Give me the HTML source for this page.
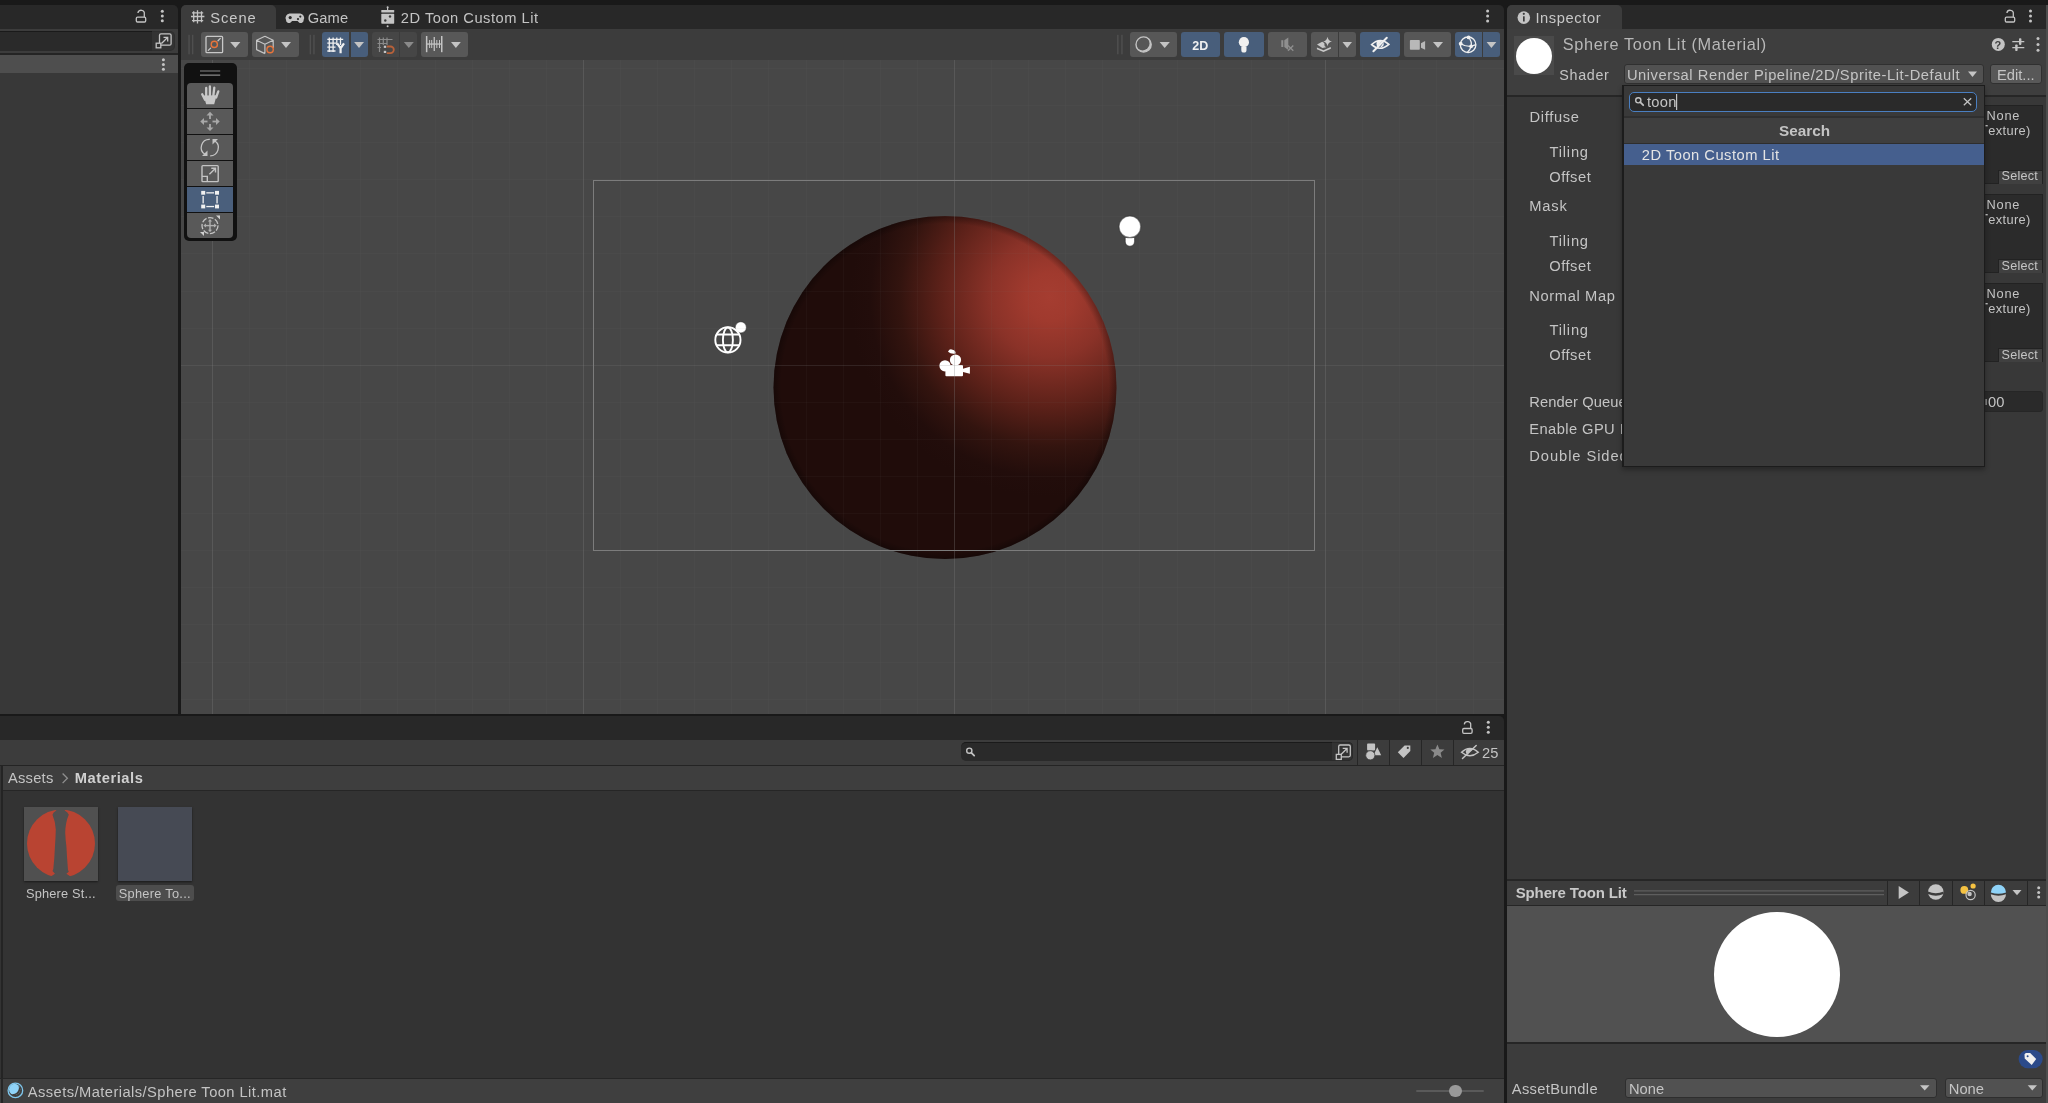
<!DOCTYPE html>
<html><head><meta charset="utf-8">
<style>
*{box-sizing:border-box;margin:0;padding:0}
html,body{width:2048px;height:1103px;overflow:hidden;background:#191919;font-family:"Liberation Sans",sans-serif;color:#c4c4c4}
.a{position:absolute}
.t{position:absolute;white-space:nowrap;line-height:1}
svg{position:absolute;overflow:visible;will-change:transform}
</style></head><body>


<!-- ============ LEFT HIERARCHY PANEL ============ -->
<div class="a" style="left:0;top:5px;width:178px;height:24px;background:#282828;border-top-right-radius:5px"></div>
<div class="a" style="left:0;top:29px;width:178px;height:24px;background:#3c3c3c"></div>
<div class="a" style="left:0;top:31px;width:152px;height:20px;background:#2a2a2a;border-top:1.3px solid #1a1a1a"></div>
<div class="a" style="left:152px;top:31px;width:23px;height:20px;background:#333;border-radius:0 5px 5px 0;border:1px solid #2e2e2e;border-left:none"></div>
<div class="a" style="left:0;top:53px;width:178px;height:2px;background:#242424"></div>
<div class="a" style="left:0;top:55px;width:178px;height:18px;background:#4e4e4e"></div>
<div class="a" style="left:0;top:73px;width:178px;height:641px;background:#383838"></div>

<!-- ============ SCENE PANEL ============ -->
<div class="a" style="left:181px;top:5px;width:1323px;height:24px;background:#282828;border-top-left-radius:5px;border-top-right-radius:5px"></div>
<div class="a" style="left:181px;top:5px;width:95px;height:26px;background:#3c3c3c;border-top-left-radius:5px;border-top-right-radius:5px"></div>
<div class="a" style="left:181px;top:29px;width:1323px;height:31px;background:#3c3c3c"></div>
<div class="a" style="left:181px;top:60px;width:1323px;height:654px;background:#474747;overflow:hidden" id="sv"></div>

<!-- ============ INSPECTOR PANEL ============ -->
<div class="a" style="left:1507px;top:5px;width:541px;height:24px;background:#282828;border-top-left-radius:5px"></div>
<div class="a" style="left:1507px;top:5px;width:115px;height:26px;background:#3c3c3c;border-top-left-radius:5px;border-top-right-radius:5px"></div>
<div class="a" style="left:1507px;top:29px;width:540px;height:66px;background:#3e3e3e"></div>
<div class="a" style="left:1507px;top:95px;width:540px;height:2px;background:#262626"></div>
<div class="a" style="left:1507px;top:97px;width:540px;height:782px;background:#383838"></div>
<div class="a" style="left:1507px;top:879px;width:540px;height:2px;background:#262626"></div>
<div class="a" style="left:1507px;top:881px;width:540px;height:24px;background:#3c3c3c"></div>
<div class="a" style="left:1507px;top:905px;width:540px;height:1px;background:#262626"></div>
<div class="a" style="left:1507px;top:906px;width:540px;height:136px;background:#515151"></div>
<div class="a" style="left:1507px;top:1042px;width:540px;height:2px;background:#262626"></div>
<div class="a" style="left:1507px;top:1044px;width:540px;height:59px;background:#3c3c3c"></div>

<!-- ============ PROJECT PANEL ============ -->
<div class="a" style="left:0;top:716px;width:1504px;height:24px;background:#282828;border-top-right-radius:5px"></div>
<div class="a" style="left:0;top:740px;width:1504px;height:25px;background:#3c3c3c"></div>
<div class="a" style="left:0;top:765px;width:1504px;height:1px;background:#242424"></div>
<div class="a" style="left:0;top:766px;width:1504px;height:312px;background:#333333"></div>
<div class="a" style="left:3px;top:766px;width:1501px;height:24px;background:#3e3e3e"></div>
<div class="a" style="left:3px;top:790px;width:1501px;height:1px;background:#262626"></div>
<div class="a" style="left:1px;top:766px;width:2px;height:337px;background:#242424"></div>
<div class="a" style="left:0;top:1078px;width:1504px;height:1px;background:#262626"></div>
<div class="a" style="left:0;top:1079px;width:1504px;height:24px;background:#3f3f3f"></div>

<div class="a" style="left:1px;top:1078px;width:1.5px;height:25px;background:#262626"></div>
<svg style="left:0;top:0" width="2048" height="1103" viewBox="0 0 2048 1103">
<defs><clipPath id="svc"><rect x="181" y="60" width="1323" height="654"/></clipPath><radialGradient id="sph" gradientUnits="userSpaceOnUse" cx="1050" cy="297" r="200" fx="1050" fy="297"><stop offset="0" stop-color="#a53d31"/><stop offset="0.12" stop-color="#a03a2e"/><stop offset="0.3" stop-color="#8a3228"/><stop offset="0.55" stop-color="#5c2119"/><stop offset="0.75" stop-color="#33140f"/><stop offset="0.9" stop-color="#220d0b"/><stop offset="1" stop-color="#200c0a"/></radialGradient><radialGradient id="rim" gradientUnits="userSpaceOnUse" cx="945" cy="387.5" r="171.5"><stop offset="0.955" stop-color="#000" stop-opacity="0"/><stop offset="1" stop-color="#000" stop-opacity="0.3"/></radialGradient></defs>
<g clip-path="url(#svc)">
<rect x="181" y="60" width="1323" height="654" fill="#474747"/>
<circle cx="945" cy="387.5" r="171.5" fill="url(#sph)"/>
<circle cx="945" cy="387.5" r="171.5" fill="url(#rim)"/>

<g stroke="#333" stroke-opacity="0.6" stroke-width="1.2" fill="#fff">
<!-- light gizmo -->
<path d="M1125.2 237.5H1134.6V241.6A4.7 4.7 0 0 1 1125.2 241.6Z"/>
<circle cx="1129.9" cy="226.8" r="10.9"/>
<!-- globe dot -->
<circle cx="740.8" cy="327.4" r="5.7"/>
</g>
<g fill="none" stroke="#fff" stroke-width="1.9">
<circle cx="727.9" cy="339.9" r="12.6"/>
<ellipse cx="727.9" cy="339.9" rx="5" ry="12.4"/>
<path d="M716.3 334.5H739.5M716.3 345.2H739.5"/>
</g>
<!-- camera gizmo -->
<g fill="#fff">
<circle cx="955.5" cy="360" r="5.6"/>
<circle cx="945" cy="365.8" r="5.6"/>
<rect x="945.4" y="365" width="17.6" height="11.2" rx="1"/>
<path d="M962 369L969.9 366.7V373.8L962 371.8Z"/>
<path d="M948 351.8Q949.5 348.3 952.6 349.8Q955.8 350.5 955.6 353.5Q951 354.3 948 351.8Z"/>
</g>

<rect x="212" y="60" width="1" height="654" fill="#808080" fill-opacity="0.315"/>
<rect x="249" y="60" width="1" height="654" fill="#808080" fill-opacity="0.055"/>
<rect x="286" y="60" width="1" height="654" fill="#808080" fill-opacity="0.055"/>
<rect x="323" y="60" width="1" height="654" fill="#808080" fill-opacity="0.055"/>
<rect x="360" y="60" width="1" height="654" fill="#808080" fill-opacity="0.055"/>
<rect x="397" y="60" width="1" height="654" fill="#808080" fill-opacity="0.055"/>
<rect x="435" y="60" width="1" height="654" fill="#808080" fill-opacity="0.055"/>
<rect x="472" y="60" width="1" height="654" fill="#808080" fill-opacity="0.055"/>
<rect x="509" y="60" width="1" height="654" fill="#808080" fill-opacity="0.055"/>
<rect x="546" y="60" width="1" height="654" fill="#808080" fill-opacity="0.055"/>
<rect x="583" y="60" width="1" height="654" fill="#808080" fill-opacity="0.315"/>
<rect x="620" y="60" width="1" height="654" fill="#808080" fill-opacity="0.055"/>
<rect x="657" y="60" width="1" height="654" fill="#808080" fill-opacity="0.055"/>
<rect x="694" y="60" width="1" height="654" fill="#808080" fill-opacity="0.055"/>
<rect x="731" y="60" width="1" height="654" fill="#808080" fill-opacity="0.055"/>
<rect x="768" y="60" width="1" height="654" fill="#808080" fill-opacity="0.055"/>
<rect x="806" y="60" width="1" height="654" fill="#808080" fill-opacity="0.055"/>
<rect x="843" y="60" width="1" height="654" fill="#808080" fill-opacity="0.055"/>
<rect x="880" y="60" width="1" height="654" fill="#808080" fill-opacity="0.055"/>
<rect x="917" y="60" width="1" height="654" fill="#808080" fill-opacity="0.055"/>
<rect x="954" y="60" width="1" height="654" fill="#808080" fill-opacity="0.315"/>
<rect x="991" y="60" width="1" height="654" fill="#808080" fill-opacity="0.055"/>
<rect x="1028" y="60" width="1" height="654" fill="#808080" fill-opacity="0.055"/>
<rect x="1065" y="60" width="1" height="654" fill="#808080" fill-opacity="0.055"/>
<rect x="1102" y="60" width="1" height="654" fill="#808080" fill-opacity="0.055"/>
<rect x="1139" y="60" width="1" height="654" fill="#808080" fill-opacity="0.055"/>
<rect x="1177" y="60" width="1" height="654" fill="#808080" fill-opacity="0.055"/>
<rect x="1214" y="60" width="1" height="654" fill="#808080" fill-opacity="0.055"/>
<rect x="1251" y="60" width="1" height="654" fill="#808080" fill-opacity="0.055"/>
<rect x="1288" y="60" width="1" height="654" fill="#808080" fill-opacity="0.055"/>
<rect x="1325" y="60" width="1" height="654" fill="#808080" fill-opacity="0.315"/>
<rect x="1362" y="60" width="1" height="654" fill="#808080" fill-opacity="0.055"/>
<rect x="1399" y="60" width="1" height="654" fill="#808080" fill-opacity="0.055"/>
<rect x="1436" y="60" width="1" height="654" fill="#808080" fill-opacity="0.055"/>
<rect x="1473" y="60" width="1" height="654" fill="#808080" fill-opacity="0.055"/>
<rect x="181" y="68" width="1323" height="1" fill="#808080" fill-opacity="0.055"/>
<rect x="181" y="105" width="1323" height="1" fill="#808080" fill-opacity="0.055"/>
<rect x="181" y="142" width="1323" height="1" fill="#808080" fill-opacity="0.055"/>
<rect x="181" y="179" width="1323" height="1" fill="#808080" fill-opacity="0.055"/>
<rect x="181" y="216" width="1323" height="1" fill="#808080" fill-opacity="0.055"/>
<rect x="181" y="253" width="1323" height="1" fill="#808080" fill-opacity="0.055"/>
<rect x="181" y="291" width="1323" height="1" fill="#808080" fill-opacity="0.055"/>
<rect x="181" y="328" width="1323" height="1" fill="#808080" fill-opacity="0.055"/>
<rect x="181" y="365" width="1323" height="1" fill="#808080" fill-opacity="0.2"/>
<rect x="181" y="402" width="1323" height="1" fill="#808080" fill-opacity="0.055"/>
<rect x="181" y="439" width="1323" height="1" fill="#808080" fill-opacity="0.055"/>
<rect x="181" y="476" width="1323" height="1" fill="#808080" fill-opacity="0.055"/>
<rect x="181" y="513" width="1323" height="1" fill="#808080" fill-opacity="0.055"/>
<rect x="181" y="550" width="1323" height="1" fill="#808080" fill-opacity="0.055"/>
<rect x="181" y="587" width="1323" height="1" fill="#808080" fill-opacity="0.055"/>
<rect x="181" y="624" width="1323" height="1" fill="#808080" fill-opacity="0.055"/>
<rect x="181" y="662" width="1323" height="1" fill="#808080" fill-opacity="0.055"/>
<rect x="181" y="699" width="1323" height="1" fill="#808080" fill-opacity="0.055"/>
<rect x="593.5" y="180.5" width="721" height="370" fill="none" stroke="#7c7c7c" stroke-width="1"/>
</g></svg>
<div class="a" style="left:183.5px;top:63px;width:53px;height:177.5px;background:#111;border-radius:5px"></div>
<div class="a" style="left:187px;top:83px;width:46px;height:24.7px;background:#595959;border-radius:4px 4px 0 0"></div>
<div class="a" style="left:187px;top:109px;width:46px;height:24.7px;background:#595959"></div>
<div class="a" style="left:187px;top:135px;width:46px;height:24.6px;background:#595959"></div>
<div class="a" style="left:187px;top:161px;width:46px;height:24.8px;background:#595959"></div>
<div class="a" style="left:187px;top:187px;width:46px;height:24.8px;background:#4a5f7c"></div>
<div class="a" style="left:187px;top:213px;width:46px;height:24.8px;background:#595959;border-radius:0 0 4px 4px"></div>
<svg style="left:0;top:0" width="2048" height="1103">
<path d="M200 71H220.2M200 75.1H220.2" stroke="#8a8a8a" stroke-width="1.1"/>
<!-- hand -->
<g fill="#c8c8c8">
<path d="M203.6 95.6L216.6 95.3L214.2 104.2H206.2Z"/>
</g>
<g stroke="#c8c8c8" stroke-width="2.3" stroke-linecap="round" fill="none">
<path d="M206.2 96.5V87.9M209.9 95.5V86.4M213.3 96L214.3 87.7M216.1 97.5L218.3 91.4M205 99.8L202.2 94.2"/>
</g>
<!-- move -->
<g fill="#a8a8a8">
<rect x="209.1" y="114.5" width="1.8" height="4.5"/><rect x="209.1" y="124" width="1.8" height="4.5"/>
<rect x="203" y="120.6" width="4.5" height="1.8"/><rect x="212.5" y="120.6" width="4.5" height="1.8"/>
<path d="M206.5 115.5L210 111.8L213.5 115.5Z"/><path d="M206.5 127.4L210 131L213.5 127.4Z"/>
<path d="M204 118L200.3 121.5L204 125Z"/><path d="M216 118L219.7 121.5L216 125Z"/>
</g>
<!-- rotate -->
<g fill="none" stroke="#c4c4c4" stroke-width="1.3">
<path d="M209.8 139.3A8.2 8.2 0 0 0 205.2 154.5"/>
<path d="M210.2 155.8A8.2 8.2 0 0 0 215 141"/>
</g>
<g fill="#c4c4c4">
<path d="M207.5 150.5V156H202Z"/><path d="M212.5 144.5V139H218Z"/>
</g>
<!-- scale -->
<g fill="none" stroke="#c4c4c4" stroke-width="1.4">
<rect x="202" y="165.6" width="16.2" height="16" rx="0.8"/>
<path d="M202 176.4H207.3V181.6M209.4 174.3L215.3 168.4M211.3 168.3H215.5V172.5"/>
</g>
<!-- rect tool -->
<g fill="#f0f0f0">
<rect x="201.2" y="190.9" width="4" height="3.8"/><rect x="215" y="190.9" width="4" height="3.8"/>
<rect x="201.2" y="204.6" width="4" height="3.8"/><rect x="215" y="204.6" width="4" height="3.8"/>
<rect x="206.3" y="192.2" width="7.8" height="1.3"/><rect x="206.3" y="205.9" width="7.8" height="1.3"/>
<rect x="202.5" y="196" width="1.3" height="7.4"/><rect x="216.4" y="196" width="1.3" height="7.4"/>
</g>
<!-- transform tool -->
<g fill="none" stroke="#c4c4c4" stroke-width="1.3" stroke-dasharray="5.5 1.6">
<circle cx="210" cy="225.6" r="8"/>
</g>
<g fill="#b0b0b0">
<rect x="209.3" y="220" width="1.4" height="11"/><rect x="204.5" y="224.9" width="11" height="1.4"/>
<path d="M208 221.5L210 218.9L212 221.5Z"/><path d="M208 229.7L210 232.3L212 229.7Z"/>
<path d="M206 223.6L203.4 225.6L206 227.6Z"/><path d="M214 223.6L216.6 225.6L214 227.6Z"/>
</g>
<g fill="#d0d0d0"><path d="M216 215.5H220V219.5Z"/><path d="M200 232H204V236Z"/></g>
</svg>
<!-- scene toolbar buttons -->
<div class="a" style="left:201px;top:32px;width:46.5px;height:24.6px;background:#575757;border-radius:3px"></div>
<div class="a" style="left:252px;top:32px;width:46.5px;height:24.6px;background:#575757;border-radius:3px"></div>
<div class="a" style="left:322px;top:32px;width:46px;height:24.6px;background:#485e7b;border-radius:3px"></div>
<div class="a" style="left:349.3px;top:32px;width:1.4px;height:24.6px;background:#3c3c3c"></div>
<div class="a" style="left:372px;top:32px;width:44.7px;height:24.6px;background:#464646;border-radius:3px"></div>
<div class="a" style="left:399px;top:32px;width:1.2px;height:24.6px;background:#3c3c3c"></div>
<div class="a" style="left:421px;top:32px;width:46.7px;height:24.6px;background:#585858;border-radius:3px"></div>
<div class="a" style="left:1130px;top:32px;width:47px;height:24.6px;background:#575757;border-radius:3px"></div>
<div class="a" style="left:1181px;top:32px;width:39px;height:24.6px;background:#485e7b;border-radius:3px"></div>
<div class="a" style="left:1224px;top:32px;width:39.7px;height:24.6px;background:#485e7b;border-radius:3px"></div>
<div class="a" style="left:1267.5px;top:32px;width:39.5px;height:24.6px;background:#575757;border-radius:3px"></div>
<div class="a" style="left:1311px;top:32px;width:45.4px;height:24.6px;background:#575757;border-radius:3px"></div>
<div class="a" style="left:1338px;top:32px;width:1.2px;height:24.6px;background:#3c3c3c"></div>
<div class="a" style="left:1360.3px;top:32px;width:39.7px;height:24.6px;background:#485e7b;border-radius:3px"></div>
<div class="a" style="left:1403.8px;top:32px;width:46.9px;height:24.6px;background:#575757;border-radius:3px"></div>
<div class="a" style="left:1454.6px;top:32px;width:45.4px;height:24.6px;background:#485e7b;border-radius:3px"></div>
<div class="a" style="left:1481.5px;top:32px;width:1.2px;height:24.6px;background:#3c3c3c"></div>
<svg style="left:0;top:0" width="2048" height="1103">
<g fill="#555">
<rect x="188.5" y="34.8" width="1.1" height="19.5"/><rect x="192.2" y="34.8" width="1.1" height="19.5"/>
<rect x="309.7" y="34.8" width="1.1" height="19.5"/><rect x="313.4" y="34.8" width="1.1" height="19.5"/>
<rect x="1117.3" y="34.8" width="1.1" height="19.5"/><rect x="1121.4" y="34.8" width="1.1" height="19.5"/>
</g>
<g fill="#c4c4c4">
<path d="M230.2 42H240.4L235.3 48.1Z"/><path d="M281.1 42H291L286 48.1Z"/>
<path d="M354.1 42H364L359 48.1Z"/><path d="M451 42H460.8L455.9 47.9Z"/>
<path d="M1159.6 42H1169.8L1164.7 48.1Z"/><path d="M1342.5 42H1352L1347.2 48Z"/>
<path d="M1433 42H1443L1438 48Z"/><path d="M1486.6 42H1496.3L1491.4 48Z"/>
</g>
<path d="M403.9 42H413.8L408.8 48.1Z" fill="#8a8a8a"/>
<!-- rect gizmo icon -->
<rect x="206" y="36.4" width="16.6" height="16.3" rx="1" fill="none" stroke="#c8c8c8" stroke-width="1.3"/>
<path d="M208.3 50.4L210.6 48.1M218 40.7L220.3 38.4" stroke="#c8c8c8" stroke-width="1.3" stroke-linecap="round"/>
<circle cx="214.3" cy="44.4" r="3.1" fill="none" stroke="#e8743b" stroke-width="1.4"/>
<!-- cube icon -->
<path d="M264.9 36.2L273.2 40.2V48M264.9 36.2L256.6 40.2V49.6L264.9 53.6M256.6 40.2L264.9 44.2L273.2 40.2M264.9 44.2V53.6" fill="none" stroke="#c4c4c4" stroke-width="1.2" stroke-linejoin="round"/>
<circle cx="270.1" cy="49.5" r="3.2" fill="#575757" stroke="#e8743b" stroke-width="1.4"/>
<!-- grid Y icon -->
<path d="M329.3 37.5V52M333.1 37.5V52M336.8 37.5V45M340.5 37.5V45M327.3 39.3H343.2M327.3 43.2H336M327.3 47.2H335.5M327.3 51H335.5" stroke="#f0f0f0" stroke-width="1.3" fill="none"/>
<path d="M337.2 43.3L340.6 48.2L344 43.3M340.6 48.2V53.2" stroke="#f0f0f0" stroke-width="2.2" fill="none"/>
<!-- snap icon -->
<path d="M379.5 37.5V52M383.3 37.5V45M387 37.5V45M377.5 39.5H392.5M377.5 43.5H386.5M377.5 47.5H381" stroke="#8a8a8a" stroke-width="1.2" fill="none"/>
<rect x="383.8" y="45.7" width="2.4" height="2.2" fill="#c4c4c4"/><rect x="383.8" y="50.8" width="2.4" height="2.2" fill="#c4c4c4"/>
<path d="M386.8 46.5H390.5A3.3 3.3 0 0 1 390.5 53.1H386.8" fill="none" stroke="#b8613a" stroke-width="1.8"/>
<!-- ruler icon -->
<g fill="#c4c4c4">
<rect x="425.9" y="36" width="1.5" height="16.2"/><rect x="441" y="36" width="1.5" height="16.2"/>
<rect x="433.6" y="37" width="1.3" height="14"/>
<rect x="429.1" y="40" width="1" height="8"/><rect x="431.2" y="40" width="1" height="8"/>
<rect x="436.3" y="40" width="1" height="8"/><rect x="439" y="40" width="1" height="8"/>
<rect x="426" y="43.4" width="15.5" height="1.3"/>
</g>
<!-- shading icon -->
<circle cx="1143.6" cy="44.5" r="7.6" fill="#c4c4c4"/>
<circle cx="1142.5" cy="43.4" r="7" fill="#575757"/>
<circle cx="1143.6" cy="44.5" r="7.6" fill="none" stroke="#c4c4c4" stroke-width="1.4"/>
<!-- 2D -->
<text x="1192.2" y="50" font-family="Liberation Sans" font-size="13.4" font-weight="700" fill="#f0f0f0" textLength="16" lengthAdjust="spacingAndGlyphs">2D</text>
<!-- light bulb -->
<circle cx="1243.9" cy="42.2" r="5.1" fill="#f0f0f0"/>
<path d="M1241.3 46.8H1246.5V50A2.6 2.6 0 0 1 1241.3 50Z" fill="#f0f0f0"/>
<!-- audio muted -->
<g fill="#8f8f8f">
<rect x="1281.3" y="40.2" width="2" height="6.8"/>
<path d="M1284.3 40.2L1288.3 37.6V50L1284.3 47Z"/>
</g>
<path d="M1288 45.5L1293.3 50.8M1293.3 45.5L1288 50.8" stroke="#8f8f8f" stroke-width="1.3"/>
<!-- effects -->
<g fill="#c8c8c8">
<path d="M1327.5 36.8Q1328.1 40.9 1332 41.5Q1328.1 42.1 1327.5 46.3Q1326.9 42.1 1323.1 41.5Q1326.9 40.9 1327.5 36.8Z"/>
<path d="M1317 44.4L1322.2 41.7L1324.3 43Q1323.8 45.9 1326.2 47.3L1322.4 48Z"/>
<path d="M1316.9 47.6L1323.5 50.3L1330.7 46.9L1330.9 48.7L1323.5 52L1316.9 49.2Z"/>
</g>
<!-- hidden eye -->
<path d="M1371.6 44.6Q1380 36.6 1388.9 44.3Q1380 52 1371.6 44.6Z" fill="none" stroke="#f0f0f0" stroke-width="1.6"/>
<path d="M1376.8 40.9L1382.6 40.3L1377.1 46.9Q1376 43.6 1376.8 40.9Z" fill="#f0f0f0"/>
<path d="M1383.6 42.4Q1384.6 46.6 1379.8 47.8Z" fill="#f0f0f0"/>
<path d="M1373.4 51.3L1386.8 37.7" stroke="#f0f0f0" stroke-width="2" stroke-linecap="round"/>
<!-- camera -->
<g fill="#b8b8b8">
<rect x="1409.9" y="39.9" width="9.9" height="9.9" rx="0.8"/>
<path d="M1421 43.2L1425.1 40.9V49.8L1421 47.7Z"/>
</g>
<!-- gizmos globe -->
<g fill="none" stroke="#f0f0f0" stroke-width="1.3">
<circle cx="1468.1" cy="44.8" r="7.8"/>
<path d="M1460.8 43.8Q1465.5 46.8 1471.1 46.4M1468.6 37.4Q1472.2 41.5 1471.1 46.4Q1470.3 50 1467.2 52.4M1471.1 46.4L1475.8 44.6"/>
</g>
<g fill="#f0f0f0"><circle cx="1468.6" cy="37.4" r="1.9"/><circle cx="1460.7" cy="43.7" r="1.9"/><circle cx="1471.1" cy="46.3" r="1.9"/></g>
</svg>
<svg style="left:0;top:0" width="2048" height="1103">
<g fill="none" stroke="#c4c4c4">
<!-- locks -->
<path d="M144.3 17.2V14.0A3.1 3.1 0 0 0 137.9 13.0" stroke-width="1.3"/>
<rect x="136.3" y="17.2" width="9.4" height="4.8" rx="1.2" stroke-width="1.3"/>
<path d="M2013.3 17.2V14.0A3.1 3.1 0 0 0 2006.9 13.0" stroke-width="1.3"/>
<rect x="2005.3" y="17.2" width="9.4" height="4.8" rx="1.2" stroke-width="1.3"/>
<path d="M1470.7 728.5V725.3A3.1 3.1 0 0 0 1464.3 724.3" stroke-width="1.3"/>
<rect x="1462.7" y="728.5" width="9.4" height="4.8" rx="1.2" stroke-width="1.3"/>
<!-- scene tab # -->
<path d="M193.7 11.3V22.3M197.5 10.2V23.6M201.5 11.3V22.3M192 12.8H203.2M191 16.5H204.4M192 20.6H203.2" stroke-width="1.3"/>
<!-- hierarchy search btn icon -->
<rect x="159.5" y="33.8" width="11.6" height="11.4" rx="1.5" stroke-width="1.3"/>
<rect x="156.2" y="43.2" width="4.6" height="4.6" stroke-width="1.3" fill="#333"/>
<path d="M161.5 43.5L167.5 37.5M163.5 37.3H167.7V41.5" stroke-width="1.3"/>
<!-- info circle -->
</g>
<g fill="#c4c4c4">
<circle cx="162.3" cy="11.2" r="1.5"/><circle cx="162.3" cy="16" r="1.5"/><circle cx="162.3" cy="20.8" r="1.5"/>
<circle cx="163.4" cy="59.7" r="1.5"/><circle cx="163.4" cy="64.5" r="1.5"/><circle cx="163.4" cy="69.2" r="1.5"/>
<circle cx="1487.6" cy="11" r="1.5"/><circle cx="1487.6" cy="16" r="1.5"/><circle cx="1487.6" cy="21" r="1.5"/>
<circle cx="2030.5" cy="11" r="1.5"/><circle cx="2030.5" cy="16" r="1.5"/><circle cx="2030.5" cy="21" r="1.5"/>
<circle cx="1488.3" cy="722.3" r="1.5"/><circle cx="1488.3" cy="727.3" r="1.5"/><circle cx="1488.3" cy="732.3" r="1.5"/>
<circle cx="2038" cy="38.5" r="1.5"/><circle cx="2038" cy="44.5" r="1.5"/><circle cx="2038" cy="50.2" r="1.5"/>
<circle cx="2038.7" cy="887.8" r="1.5"/><circle cx="2038.7" cy="892.4" r="1.5"/><circle cx="2038.7" cy="897.1" r="1.5"/>
<!-- info icon -->
<circle cx="1523.8" cy="17.6" r="6.3"/>
<!-- help icon -->
<circle cx="1998.3" cy="44.4" r="6.5"/>
<!-- gamepad -->
<path d="M289.5 13.5H300.2A4.4 4.4 0 0 1 303.7 19.8A2.9 2.9 0 0 1 298.8 22.2L297.6 20.9H292.1L290.9 22.2A2.9 2.9 0 0 1 286 19.8A4.4 4.4 0 0 1 289.5 13.5Z"/>
<!-- shader icon -->
<rect x="381.3" y="10" width="12.9" height="2.6" rx="0.6"/>
<rect x="381.3" y="13.8" width="12.9" height="9.9" rx="0.6"/>
<rect x="387" y="7" width="1.2" height="3.5"/><circle cx="387.6" cy="7.3" r="1"/><circle cx="387.6" cy="26.2" r="1"/>
</g>
<g fill="#282828">
<circle cx="290.2" cy="17.6" r="1.6"/><circle cx="300.3" cy="16.6" r="1.1"/><circle cx="298" cy="19.1" r="1.1"/>
</g>
<g fill="#3c3c3c">
<circle cx="390" cy="16.5" r="1.2"/><circle cx="385.3" cy="20.5" r="1.2"/>
<rect x="1523" y="16.3" width="1.7" height="5.2"/><circle cx="1523.8" cy="13.8" r="1.1"/>
</g>
<g fill="#3e3e3e"><text x="1994.6" y="49" font-family="Liberation Sans" font-size="11" font-weight="700">?</text></g>
<!-- sliders icon -->
<g stroke="#c4c4c4" stroke-width="1.4" fill="none">
<path d="M2012.3 41.6H2024.3M2012.3 47.6H2024.3"/>
</g>
<g fill="#c4c4c4"><rect x="2019" y="38.3" width="2.4" height="6.6" rx="0.8"/><rect x="2015.2" y="44.4" width="2.4" height="6.6" rx="0.8"/></g>
</svg>
<!-- project toolbar -->
<div class="a" style="left:961px;top:742.3px;width:392px;height:19.2px;background:#2a2a2a;border-radius:5px;border-top:1.3px solid #1a1a1a"></div>
<div class="a" style="left:1331.7px;top:742.3px;width:21.6px;height:19.2px;background:#333;border-radius:0 5px 5px 0;border:1px solid #2a2a2a;border-left:none"></div>
<div class="a" style="left:1357px;top:740px;width:1px;height:25px;background:#262626"></div>
<div class="a" style="left:1389px;top:740px;width:1px;height:25px;background:#262626"></div>
<div class="a" style="left:1421px;top:740px;width:1px;height:25px;background:#262626"></div>
<div class="a" style="left:1453px;top:740px;width:1px;height:25px;background:#262626"></div>
<!-- thumbnails -->
<div class="a" style="left:23.7px;top:807px;width:74.2px;height:74px;background:#505050;box-shadow:0 1px 2px rgba(0,0,0,0.5)"></div>
<div class="a" style="left:118px;top:807px;width:74px;height:74px;background:#464a54;box-shadow:0 1px 2px rgba(0,0,0,0.5)"></div>
<div class="a" style="left:116.2px;top:885.2px;width:77.5px;height:16.3px;background:#4d4d4d;border-radius:3px"></div>
<!-- slider -->
<div class="a" style="left:1416px;top:1090.2px;width:68px;height:2px;background:#5a5a5a;border-radius:1px"></div>
<div class="a" style="left:1449.3px;top:1084.6px;width:12.8px;height:12.8px;background:#999;border-radius:50%"></div>
<svg style="left:0;top:0" width="2048" height="1103">
<!-- red sphere thumbnail -->
<defs><clipPath id="thc"><circle cx="61" cy="843.5" r="34"/></clipPath></defs>
<g clip-path="url(#thc)">
<path d="M20 800H57L56.2 810.6Q53 812.5 52.5 814.7Q55.5 822 55.8 829.4Q55.6 838 55 845.7Q54.5 858 53.3 869.3L52.5 871L55 873.8L50 877V882H20Z" fill="#b94432"/>
<path d="M100 800H64L64.8 810.6Q68 812.5 68.8 814.7Q65.5 822 65.2 832.6Q65.5 840 66.4 846.5Q67 858 68 870L68.8 871.8L66.4 873.8L71.3 877V882H100Z" fill="#b94432"/>
</g>
<g fill="none" stroke="#c4c4c4"><!-- project search btn icon -->
<rect x="1338.7" y="745" width="11.6" height="11.8" rx="1.5" stroke-width="1.3"/>
<rect x="1336.3" y="754.4" width="5" height="5" stroke-width="1.3" fill="#353535"/>
<path d="M1341 754.5L1346.8 748.7M1342.7 748.4H1347.1V752.8" stroke-width="1.3"/>
</g>
<!-- search icon -->
<circle cx="969.3" cy="750.7" r="2.6" fill="none" stroke="#c4c4c4" stroke-width="1.4"/>
<path d="M971.2 752.6L974.2 755.6" stroke="#c4c4c4" stroke-width="1.8" stroke-linecap="round"/>
<!-- shapes icon -->
<g fill="#c4c4c4"><rect x="1367.1" y="743.6" width="8" height="6.8" rx="0.8"/><path d="M1377.3 747.3L1381.2 755.2H1373.5Z"/></g>
<circle cx="1370.3" cy="755.3" r="4.6" fill="#c4c4c4" stroke="#3c3c3c" stroke-width="0.8"/>
<!-- tag icon -->
<path d="M1404.6 745.4H1410.3V751.1L1403.5 757.9L1397.8 752.2Z" fill="#c4c4c4"/>
<circle cx="1407.8" cy="747.9" r="1.1" fill="#3c3c3c"/>
<!-- star -->
<path d="M1437.4 744.4L1439.4 749.3L1444.5 749.5L1440.6 752.8L1441.9 757.9L1437.4 755L1432.9 757.9L1434.2 752.8L1430.3 749.5L1435.4 749.3Z" fill="#8a8a8a"/>
<!-- eye slash -->
<path d="M1461.5 752.2Q1469.8 745 1478.3 752.2Q1469.8 759.2 1461.5 752.2Z" fill="none" stroke="#c4c4c4" stroke-width="1.4"/>
<path d="M1466.8 754.2A3.5 3.5 0 0 1 1472.5 749.6Z" fill="#c4c4c4"/>
<path d="M1462.5 758.5L1476.2 745.5" stroke="#c4c4c4" stroke-width="1.5" stroke-linecap="round"/>
<!-- breadcrumb chevron -->
<path d="M62.6 773.5L67.4 778.3L62.6 783.1" fill="none" stroke="#8f8f8f" stroke-width="1.3"/>
<!-- status icon -->
<circle cx="15.4" cy="1090.4" r="7.3" fill="none" stroke="#7ec6ec" stroke-width="1.3"/>
<circle cx="14.6" cy="1089.4" r="5.6" fill="#8fd3f8"/>
<path d="M18.5 1085.5A5.6 5.6 0 0 1 11.5 1094.2A6.5 6.5 0 0 0 18.5 1085.5Z" fill="#3e3e3e"/>
</svg>
<div class="a" style="left:1887px;top:880.5px;width:1px;height:24.5px;background:#262626"></div>
<div class="a" style="left:1919.2px;top:880.5px;width:1px;height:24.5px;background:#262626"></div>
<div class="a" style="left:1951.5px;top:880.5px;width:1px;height:24.5px;background:#262626"></div>
<div class="a" style="left:1984px;top:880.5px;width:1px;height:24.5px;background:#262626"></div>
<div class="a" style="left:2027px;top:880.5px;width:1px;height:24.5px;background:#262626"></div>
<div class="a" style="left:1714.3px;top:911.6px;width:125.8px;height:125.8px;background:#fff;border-radius:50%"></div>
<div class="a" style="left:1625px;top:1078px;width:311.7px;height:20.4px;background:#515151;border-radius:3px;border:1px solid #2e2e2e"></div>
<div class="a" style="left:1944.7px;top:1078px;width:98.5px;height:20.4px;background:#515151;border-radius:3px;border:1px solid #2e2e2e"></div>
<div class="a" style="left:2046px;top:5px;width:2px;height:1098px;background:#4d4d4d"></div>
<svg style="left:0;top:0" width="2048" height="1103">
<path d="M1634 890.9H1884M1634 894.6H1884" stroke="#5e5e5e" stroke-width="1.2"/>
<path d="M1898.7 886L1908.9 892.4L1898.7 898.9Z" fill="#c4c4c4"/>
<circle cx="1935.8" cy="892" r="7.8" fill="#c4c4c4"/>
<path d="M1928 891.5Q1935.8 895 1943.6 891.5V894Q1935.8 897.5 1928 894Z" fill="#3c3c3c"/>
<circle cx="1964.3" cy="889.9" r="3.9" fill="#f5c242"/>
<circle cx="1973.1" cy="886" r="2.6" fill="#f5c242"/>
<circle cx="1970.6" cy="895" r="4.6" fill="none" stroke="#c4c4c4" stroke-width="1.2"/>
<circle cx="1969.6" cy="894" r="2.2" fill="#c4c4c4"/>
<path d="M1990.8 892.4A7.6 7.6 0 0 1 2006 892.4Q1998.4 895 1990.8 892.4Z" fill="#8fd3f8"/>
<path d="M1990.8 894.3Q1998.4 897 2006 894.3A7.6 7.6 0 0 1 1990.8 894.3Z" fill="#c4c4c4"/>
<path d="M2012.5 889.9H2021.5L2017 895.2Z" fill="#c4c4c4"/>
<rect x="2018.6" y="1050" width="24.1" height="18.2" rx="9.1" fill="#2b4a8a"/>
<path d="M2024.5 1054.2L2025.8 1052.9L2030.2 1053.1L2036.2 1059L2031.7 1065L2024.7 1058.6Z" fill="#f0f0f0"/>
<circle cx="2027.6" cy="1056.3" r="1" fill="#284a8a"/>
<path d="M1920 1085.2H1929.5L1924.7 1090.5Z" fill="#c4c4c4"/>
<path d="M2027.7 1085.2H2037L2032.3 1090.5Z" fill="#c4c4c4"/>
</svg>
<!-- inspector header -->
<div class="a" style="left:1514px;top:36px;width:40px;height:39px;background:#4a4a4a"></div>
<div class="a" style="left:1516px;top:38px;width:36px;height:36px;border-radius:50%;background:#fff"></div>
<div class="a" style="left:1624px;top:64px;width:360px;height:20px;background:#515151;border-radius:3px;border:1px solid #303030"></div>
<div class="a" style="left:1990px;top:64px;width:52px;height:20px;background:#585858;border-radius:3px;border:1px solid #303030"></div>
<!-- texture fields -->
<div class="a" style="left:1984px;top:105px;width:59px;height:79px;background:#2b2b2b;border:1px solid #222"></div>
<div class="a" style="left:1998px;top:170px;width:44px;height:14px;background:#404040;border-left:1px solid #222;border-top:1px solid #222"></div>
<div class="a" style="left:1984px;top:194px;width:59px;height:79px;background:#2b2b2b;border:1px solid #222"></div>
<div class="a" style="left:1998px;top:259px;width:44px;height:14px;background:#404040;border-left:1px solid #222;border-top:1px solid #222"></div>
<div class="a" style="left:1984px;top:283px;width:59px;height:79px;background:#2b2b2b;border:1px solid #222"></div>
<div class="a" style="left:1998px;top:348px;width:44px;height:14px;background:#404040;border-left:1px solid #222;border-top:1px solid #222"></div>
<div class="a" style="left:1960px;top:391px;width:83px;height:21px;background:#2a2a2a;border-radius:3px;border:1px solid #262626"></div>
<svg style="left:0;top:0" width="2048" height="1103">
<path d="M1968 71.5H1977L1972.5 77Z" fill="#c4c4c4"/>
<rect x="1985.5" y="125" width="2.2" height="1.4" fill="#c4c4c4"/>
<rect x="1985.5" y="214" width="2.2" height="1.4" fill="#c4c4c4"/>
<rect x="1985.5" y="303" width="2.2" height="1.4" fill="#c4c4c4"/>
<rect x="1985.5" y="399" width="1.3" height="6" fill="#9a9a9a"/>
</svg>
<svg style="left:0;top:0" width="2048" height="1103">
<text x="210.3" y="23" font-family="Liberation Sans" font-size="14.7" font-weight="400" fill="#c8c8c8" textLength="45.41" lengthAdjust="spacing">Scene</text>
<text x="307.8" y="23" font-family="Liberation Sans" font-size="14.7" font-weight="400" fill="#c4c4c4" textLength="40.27" lengthAdjust="spacing">Game</text>
<text x="400.8" y="23" font-family="Liberation Sans" font-size="14.7" font-weight="400" fill="#c4c4c4" textLength="137.19" lengthAdjust="spacing">2D Toon Custom Lit</text>
<text x="1535.4" y="23" font-family="Liberation Sans" font-size="14.7" font-weight="400" fill="#c8c8c8" textLength="65.15" lengthAdjust="spacing">Inspector</text>
<text x="1562.7" y="50.3" font-family="Liberation Sans" font-size="16.3" font-weight="400" fill="#b8b8b8" textLength="203.46" lengthAdjust="spacing">Sphere Toon Lit (Material)</text>
<text x="1559.3" y="80.2" font-family="Liberation Sans" font-size="14.3" font-weight="400" fill="#c4c4c4" textLength="49.47" lengthAdjust="spacing">Shader</text>
<text x="1626.9" y="80.2" font-family="Liberation Sans" font-size="14.7" font-weight="400" fill="#c4c4c4" textLength="332.7" lengthAdjust="spacing">Universal Render Pipeline/2D/Sprite-Lit-Default</text>
<text x="1997.0" y="80.2" font-family="Liberation Sans" font-size="14.7" font-weight="400" fill="#c4c4c4" textLength="37.56" lengthAdjust="spacing">Edit...</text>
<text x="1529.6" y="122.2" font-family="Liberation Sans" font-size="14.7" font-weight="400" fill="#c4c4c4" textLength="49.42" lengthAdjust="spacing">Diffuse</text>
<text x="1549.4" y="157.4" font-family="Liberation Sans" font-size="14.7" font-weight="400" fill="#c4c4c4" textLength="38.64" lengthAdjust="spacing">Tiling</text>
<text x="1549.2" y="181.8" font-family="Liberation Sans" font-size="14.7" font-weight="400" fill="#c4c4c4" textLength="41.56" lengthAdjust="spacing">Offset</text>
<text x="1529.3" y="211.0" font-family="Liberation Sans" font-size="14.7" font-weight="400" fill="#c4c4c4" textLength="37.49" lengthAdjust="spacing">Mask</text>
<text x="1549.4" y="245.8" font-family="Liberation Sans" font-size="14.7" font-weight="400" fill="#c4c4c4" textLength="38.64" lengthAdjust="spacing">Tiling</text>
<text x="1549.2" y="271.0" font-family="Liberation Sans" font-size="14.7" font-weight="400" fill="#c4c4c4" textLength="41.56" lengthAdjust="spacing">Offset</text>
<text x="1529.3" y="300.5" font-family="Liberation Sans" font-size="14.7" font-weight="400" fill="#c4c4c4" textLength="85.56" lengthAdjust="spacing">Normal Map</text>
<text x="1549.4" y="335.0" font-family="Liberation Sans" font-size="14.7" font-weight="400" fill="#c4c4c4" textLength="38.64" lengthAdjust="spacing">Tiling</text>
<text x="1549.2" y="360.1" font-family="Liberation Sans" font-size="14.7" font-weight="400" fill="#c4c4c4" textLength="41.56" lengthAdjust="spacing">Offset</text>
<text x="1529.3" y="406.8" font-family="Liberation Sans" font-size="14.7" font-weight="400" fill="#c4c4c4" textLength="97.45" lengthAdjust="spacing">Render Queue</text>
<text x="1529.3" y="433.8" font-family="Liberation Sans" font-size="14.7" font-weight="400" fill="#c4c4c4" textLength="161.09" lengthAdjust="spacing">Enable GPU Instancing</text>
<text x="1529.3" y="461.0" font-family="Liberation Sans" font-size="14.7" font-weight="400" fill="#c4c4c4" textLength="242.01" lengthAdjust="spacing">Double Sided Global Illumination</text>
<text x="1515.7" y="898.1" font-family="Liberation Sans" font-size="15" font-weight="700" fill="#c8c8c8" textLength="111.13" lengthAdjust="spacing">Sphere Toon Lit</text>
<text x="1511.8" y="1094" font-family="Liberation Sans" font-size="14.7" font-weight="400" fill="#c4c4c4" textLength="85.77" lengthAdjust="spacing">AssetBundle</text>
<text x="1629.0" y="1093.5" font-family="Liberation Sans" font-size="14.7" font-weight="400" fill="#c4c4c4" textLength="35.12" lengthAdjust="spacing">None</text>
<text x="1948.8" y="1093.5" font-family="Liberation Sans" font-size="14.7" font-weight="400" fill="#c4c4c4" textLength="35.12" lengthAdjust="spacing">None</text>
<text x="1482.0" y="757.9" font-family="Liberation Sans" font-size="14.7" font-weight="400" fill="#c4c4c4" textLength="16.34" lengthAdjust="spacing">25</text>
<text x="8.0" y="783.2" font-family="Liberation Sans" font-size="14.7" font-weight="400" fill="#c4c4c4" textLength="45.28" lengthAdjust="spacing">Assets</text>
<text x="74.7" y="783.3" font-family="Liberation Sans" font-size="14.7" font-weight="700" fill="#d0d0d0" textLength="68.19" lengthAdjust="spacing">Materials</text>
<text x="26.0" y="897.7" font-family="Liberation Sans" font-size="12.8" font-weight="400" fill="#c4c4c4" textLength="69.54" lengthAdjust="spacing">Sphere St...</text>
<text x="118.7" y="897.7" font-family="Liberation Sans" font-size="12.8" font-weight="400" fill="#c4c4c4" textLength="71.84" lengthAdjust="spacing">Sphere To...</text>
<text x="27.8" y="1096.6" font-family="Liberation Sans" font-size="14.7" font-weight="400" fill="#c4c4c4" textLength="258.44" lengthAdjust="spacing">Assets/Materials/Sphere Toon Lit.mat</text>
<text x="1986.6" y="119.8" font-family="Liberation Sans" font-size="12.8" font-weight="400" fill="#c4c4c4" textLength="32.73" lengthAdjust="spacing">None</text>
<text x="1988.2" y="134.8" font-family="Liberation Sans" font-size="12.8" font-weight="400" fill="#c4c4c4" textLength="42.16" lengthAdjust="spacing">exture)</text>
<text x="2001.5" y="180.2" font-family="Liberation Sans" font-size="12.6" font-weight="400" fill="#c4c4c4" textLength="36.22" lengthAdjust="spacing">Select</text>
<text x="1986.6" y="208.8" font-family="Liberation Sans" font-size="12.8" font-weight="400" fill="#c4c4c4" textLength="32.73" lengthAdjust="spacing">None</text>
<text x="1988.2" y="223.8" font-family="Liberation Sans" font-size="12.8" font-weight="400" fill="#c4c4c4" textLength="42.16" lengthAdjust="spacing">exture)</text>
<text x="2001.5" y="269.8" font-family="Liberation Sans" font-size="12.6" font-weight="400" fill="#c4c4c4" textLength="36.22" lengthAdjust="spacing">Select</text>
<text x="1986.6" y="297.8" font-family="Liberation Sans" font-size="12.8" font-weight="400" fill="#c4c4c4" textLength="32.73" lengthAdjust="spacing">None</text>
<text x="1988.2" y="312.8" font-family="Liberation Sans" font-size="12.8" font-weight="400" fill="#c4c4c4" textLength="42.16" lengthAdjust="spacing">exture)</text>
<text x="2001.5" y="359.0" font-family="Liberation Sans" font-size="12.6" font-weight="400" fill="#c4c4c4" textLength="36.22" lengthAdjust="spacing">Select</text>
<text x="1988.0" y="407.2" font-family="Liberation Sans" font-size="14.7" font-weight="400" fill="#c4c4c4" textLength="16.34" lengthAdjust="spacing">00</text>
</svg>
<div class="a" style="left:1622px;top:85px;width:363px;height:382px;background:#1c1c1c;box-shadow:0 3px 5px rgba(0,0,0,0.3)"></div>
<div class="a" style="left:1624px;top:86px;width:360px;height:380px;background:#393939"></div>
<div class="a" style="left:1624px;top:116px;width:360px;height:2px;background:#2f2f2f"></div>
<div class="a" style="left:1624px;top:118px;width:360px;height:25px;background:#3f3f3f"></div>
<div class="a" style="left:1624px;top:143px;width:360px;height:1px;background:#2e2e2e"></div>
<div class="a" style="left:1624px;top:144px;width:360px;height:21px;background:#455f8e"></div>
<div class="a" style="left:1629px;top:92px;width:348px;height:20px;background:#2a2a2a;border:1.3px solid #4a7fc1;border-radius:5px"></div>
<svg style="left:0;top:0" width="2048" height="1103">
<path d="M1963.8 98.2L1971.2 105.2M1971.2 98.2L1963.8 105.2" stroke="#c4c4c4" stroke-width="1.2"/>
<circle cx="1638.3" cy="100.3" r="2.6" fill="none" stroke="#c4c4c4" stroke-width="1.4"/>
<path d="M1640.2 102.2L1643.2 105.2" stroke="#c4c4c4" stroke-width="1.8" stroke-linecap="round"/>
<rect x="1676" y="94" width="1.2" height="16" fill="#c4c4c4"/>
</svg>
<svg style="left:0;top:0" width="2048" height="1103">
<text x="1647.0" y="107.1" font-family="Liberation Sans" font-size="14.7" font-weight="400" fill="#c4c4c4" textLength="29.39" lengthAdjust="spacing">toon</text>
<text x="1779.0" y="135.9" font-family="Liberation Sans" font-size="15.3" font-weight="700" fill="#c4c4c4" textLength="51.03" lengthAdjust="spacing">Search</text>
<text x="1641.8" y="160" font-family="Liberation Sans" font-size="14.7" font-weight="400" fill="#e4e4e4" textLength="137.19" lengthAdjust="spacing">2D Toon Custom Lit</text>
</svg>
</body></html>
